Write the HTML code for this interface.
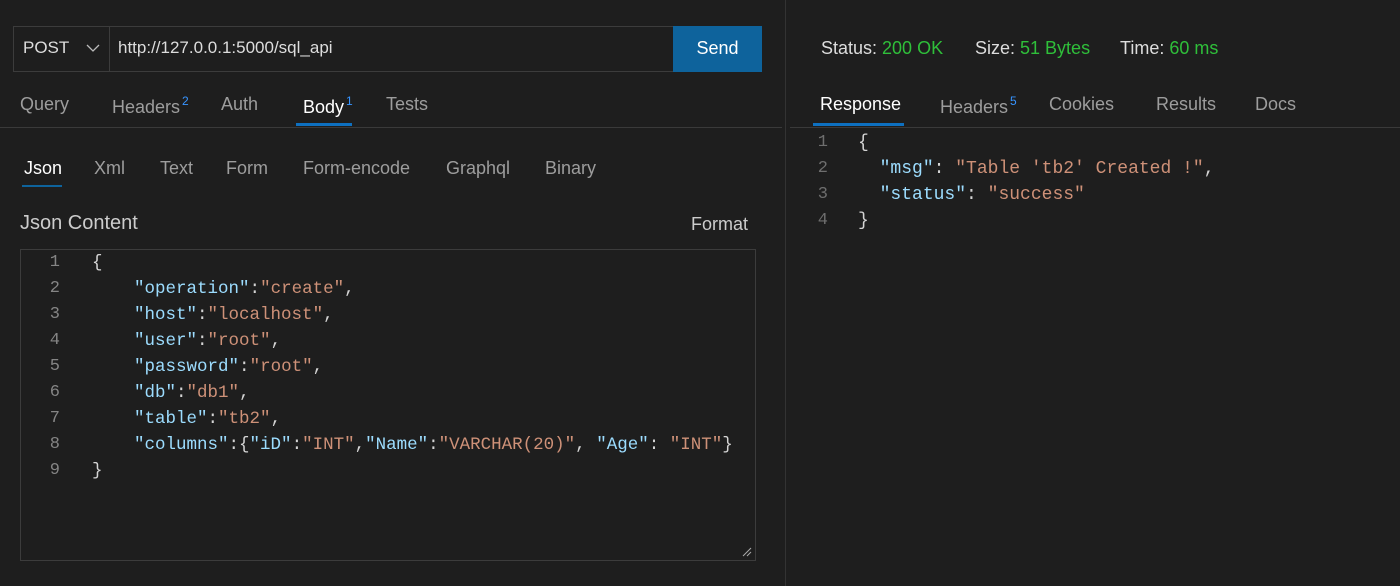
<!DOCTYPE html>
<html><head><meta charset="utf-8"><style>
body{margin:0;width:1400px;height:586px;background:#1e1e1e;font-family:"Liberation Sans",sans-serif;overflow:hidden;position:relative;color:#ccc}
.a{position:absolute;white-space:pre}
.mono{font-family:"Liberation Mono",monospace}
.k{color:#9cdcfe}.s{color:#ce9178}.p{color:#d4d4d4}
.tab{font-size:18px;color:#9d9d9d}
sup{color:#3794ff;font-size:12px;vertical-align:8px;margin-left:2px}
.g{color:#2fbf3a}
</style></head><body>
<div class="a" style="left:785px;top:0;width:1px;height:586px;background:#333"></div>
<div class="a" style="left:0;top:127px;width:782px;height:1px;background:#3a3a3a"></div>
<div class="a" style="left:790px;top:127px;width:610px;height:1px;background:#3a3a3a"></div>

<div class="a" style="left:13px;top:26px;width:660px;height:44px;border:1px solid #3c3c3c;background:#1e1e1e"></div>
<div class="a" style="left:109px;top:26px;width:1px;height:46px;background:#3c3c3c"></div>
<div class="a" style="left:23px;top:38px;font-size:17px;color:#ddd">POST</div>
<svg class="a" style="left:86px;top:44px" width="14" height="9"><path d="M1 1 L7 7 L13 1" stroke="#bbb" fill="none" stroke-width="1.3"/></svg>
<div class="a" style="left:118px;top:38px;font-size:17px;color:#ddd">http://127.0.0.1:5000/sql_api</div>
<div class="a" style="left:673px;top:26px;width:89px;height:46px;background:#0e639c;color:#fff;font-size:18px;text-align:center;line-height:44px">Send</div>

<div class="a tab" style="left:20px;top:94px">Query</div>
<div class="a tab" style="left:112px;top:94px">Headers<sup>2</sup></div>
<div class="a tab" style="left:221px;top:94px">Auth</div>
<div class="a tab" style="left:303px;top:94px;color:#fff">Body<sup>1</sup></div>
<div class="a tab" style="left:386px;top:94px">Tests</div>
<div class="a" style="left:296px;top:123px;width:56px;height:3px;background:#0e70c0"></div>

<div class="a tab" style="left:24px;top:158px;color:#fff">Json</div>
<div class="a" style="left:22px;top:185px;width:40px;height:2px;background:#0e639c"></div>
<div class="a tab" style="left:94px;top:158px">Xml</div>
<div class="a tab" style="left:160px;top:158px">Text</div>
<div class="a tab" style="left:226px;top:158px">Form</div>
<div class="a tab" style="left:303px;top:158px">Form-encode</div>
<div class="a tab" style="left:446px;top:158px">Graphql</div>
<div class="a tab" style="left:545px;top:158px">Binary</div>

<div class="a" style="left:20px;top:212px;font-size:20px;color:#ccc">Json Content</div>
<div class="a" style="left:691px;top:214px;font-size:18px;color:#ccc">Format</div>

<div class="a" style="left:20px;top:249px;width:734px;height:310px;border:1px solid #3c3c3c"></div>
<svg class="a" style="left:742px;top:547px" width="10" height="10"><path d="M1 9 L9 1 M5 9 L9 5" stroke="#aaa" stroke-width="1"/></svg>
<div class="a mono" style="left:30px;top:250px;width:30px;text-align:right;font-size:17px;line-height:26px;color:#858585">1
2
3
4
5
6
7
8
9</div>
<div class="a mono p" style="left:92px;top:250px;font-size:17.5px;line-height:26px">{
    <span class="k">"operation"</span>:<span class="s">"create"</span>,
    <span class="k">"host"</span>:<span class="s">"localhost"</span>,
    <span class="k">"user"</span>:<span class="s">"root"</span>,
    <span class="k">"password"</span>:<span class="s">"root"</span>,
    <span class="k">"db"</span>:<span class="s">"db1"</span>,
    <span class="k">"table"</span>:<span class="s">"tb2"</span>,
    <span class="k">"columns"</span>:{<span class="k">"iD"</span>:<span class="s">"INT"</span>,<span class="k">"Name"</span>:<span class="s">"VARCHAR(20)"</span>, <span class="k">"Age"</span>: <span class="s">"INT"</span>}
}</div>

<div class="a" style="left:821px;top:38px;font-size:18px;color:#ddd">Status: <span class="g">200 OK</span></div>
<div class="a" style="left:975px;top:38px;font-size:18px;color:#ddd">Size: <span class="g">51 Bytes</span></div>
<div class="a" style="left:1120px;top:38px;font-size:18px;color:#ddd">Time: <span class="g">60 ms</span></div>

<div class="a tab" style="left:820px;top:94px;color:#fff">Response</div>
<div class="a" style="left:813px;top:123px;width:91px;height:3px;background:#0e70c0"></div>
<div class="a tab" style="left:940px;top:94px">Headers<sup>5</sup></div>
<div class="a tab" style="left:1049px;top:94px">Cookies</div>
<div class="a tab" style="left:1156px;top:94px">Results</div>
<div class="a tab" style="left:1255px;top:94px">Docs</div>

<div class="a mono" style="left:810px;top:130px;width:18px;text-align:right;font-size:17px;line-height:26px;color:#6e6e6e">1
2
3
4</div>
<div class="a mono p" style="left:858px;top:130px;font-size:18px;line-height:26px">{
  <span class="k">"msg"</span>: <span class="s">"Table 'tb2' Created !"</span>,
  <span class="k">"status"</span>: <span class="s">"success"</span>
}</div>
</body></html>
